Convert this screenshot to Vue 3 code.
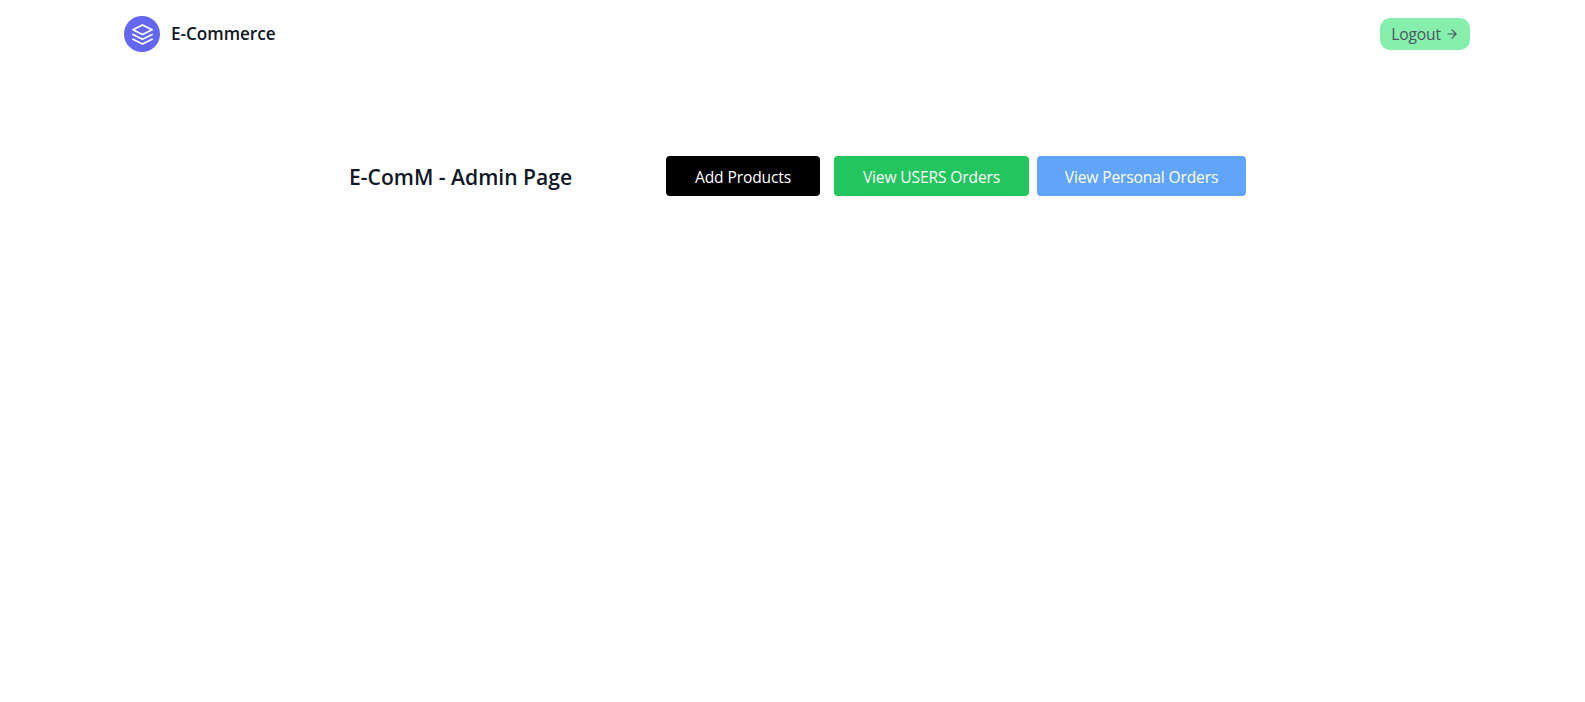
<script setup>
const actions = [
  { label: 'Add Products', kind: 'black' },
  { label: 'View USERS Orders', kind: 'green' },
  { label: 'View Personal Orders', kind: 'blue' },
]
</script>

<template>
  <div class="page">
    <header class="nav">
      <a class="brand">
        <span class="logo">
          <svg width="23" height="23" viewBox="0 0 24 24" fill="none" stroke="currentColor" stroke-width="1.8" stroke-linecap="round" stroke-linejoin="round">
            <path d="M12 2 2 7l10 5 10-5-10-5z" />
            <path d="m2 17 10 5 10-5" />
            <path d="m2 12 10 5 10-5" />
          </svg>
        </span>
        <span class="brand-name">E-Commerce</span>
      </a>
      <button class="logout">
        Logout
        <svg width="14" height="14" viewBox="0 0 24 24" fill="none" stroke="currentColor" stroke-width="2" stroke-linecap="round" stroke-linejoin="round">
          <path d="M5 12h14M12 5l7 7-7 7" />
        </svg>
      </button>
    </header>
    <main class="admin">
      <h1 class="title">E-ComM - Admin Page</h1>
      <div class="actions">
        <button v-for="a in actions" :key="a.label" class="action" :class="a.kind">{{ a.label }}</button>
      </div>
    </main>
  </div>
</template>

<style>
html, body { margin: 0; background: #fff; }
</style>

<style scoped>
.page {
  font-family: "Open Sans", "Noto Sans", sans-serif;
  min-height: 702px;
  background: #fff;
  color: #111827;
}
.nav {
  display: flex;
  align-items: center;
  justify-content: space-between;
  height: 68px;
  padding: 0 115px 0 124px;
}
.brand { display: flex; align-items: center; color: #111827; }
.logo {
  width: 36px;
  height: 36px;
  border-radius: 50%;
  background: #6366f1;
  color: #fff;
  display: flex;
  align-items: center;
  justify-content: center;
}
.brand-name { margin: 0 0 2px 11px; font-size: 17.2px; font-weight: 600; letter-spacing: -0.05px; }
.logout {
  display: flex;
  align-items: center;
  justify-content: center;
  gap: 4px;
  width: 90px;
  height: 32px;
  padding: 0;
  border: 0;
  border-radius: 10px;
  background: #86efac;
  color: #4b5563;
  font-family: inherit;
  font-size: 15.6px;
  letter-spacing: -0.15px;
}
.admin {
  display: flex;
  align-items: center;
  margin-top: 88px;
  padding-left: 349px;
}
.title {
  width: 317px;
  margin: 1px 0 0;
  font-size: 21.1px;
  font-weight: 600;
  color: #111827;
}
.actions { display: flex; }
.action {
  height: 40px;
  padding: 2px 0 0;
  border: 0;
  border-radius: 4px;
  color: #fff;
  font-family: inherit;
  font-size: 15.6px;
  letter-spacing: -0.14px;
}
.black { width: 154px; background: #000; }
.green { width: 195px; margin-left: 14px; background: #22c55e; }
.blue { width: 209px; margin-left: 8px; background: #60a5fa; }
</style>
